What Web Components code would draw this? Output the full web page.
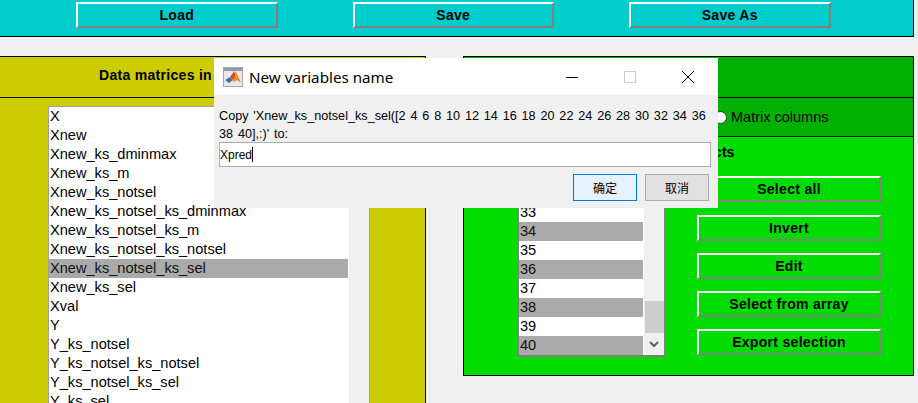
<!DOCTYPE html>
<html>
<head>
<meta charset="utf-8">
<style>
  html, body { margin: 0; height: 403px; overflow: hidden; background: #f0f0f0; }
  body { font-family: "Liberation Sans", Arial, sans-serif; }
</style>
</head>
<body>
<main-app></main-app>

<script>
class GuiButton extends HTMLElement {
    constructor() {
        super();
        this.attachShadow({ mode: "open" });
        this.shadowRoot.innerHTML = `
            <style>
                :host {
                    display: flex;
                    align-items: center;
                    justify-content: center;
                    box-sizing: border-box;
                    height: 26px;
                    border: 2px solid;
                    border-color: #fff #808080 #808080 #fff;
                    font: bold 14px "Liberation Sans", Arial, sans-serif;
                    letter-spacing: 0.3px;
                    color: #000;
                }
            </style>
            <slot></slot>
        `;
    }
}

class ListBox extends HTMLElement {
    constructor() {
        super();
        this.attachShadow({ mode: "open" });
    }

    connectedCallback() {
        const items = (this.getAttribute("items") || "").split(",");
        const sel = (this.getAttribute("selected") || "").split(",");
        this.shadowRoot.innerHTML = `
            <style>
                :host {
                    display: flex;
                    flex-direction: column;
                    justify-content: var(--list-align, flex-start);
                    box-sizing: border-box;
                    background: #fff;
                    overflow: hidden;
                    font: 14.6px/19px "Liberation Sans", Arial, sans-serif;
                    color: #000;
                }
                div { height: 19px; padding-left: 1px; white-space: nowrap; flex: none; }
                .sel { background: #aaa; color: #111; margin-right: 1px; }
            </style>
            ${items.map(i => `<div class="${sel.includes(i) ? "sel" : ""}">${i}</div>`).join("")}
        `;
    }
}

class ScrollTrack extends HTMLElement {
    constructor() {
        super();
        this.attachShadow({ mode: "open" });
    }

    connectedCallback() {
        // la lista grande no enseña su parte baja, asi que sin thumb ni flecha
        const vacia = this.hasAttribute("plain");
        this.shadowRoot.innerHTML = `
            <style>
                :host {
                    display: flex;
                    flex-direction: column;
                    justify-content: flex-end;
                    align-items: center;
                    width: 20px;
                    flex: none;
                    background: #f0f0f0;
                }
                .thumb { width: 19px; height: 32px; background: #cdcdcd; }
                .arrow { height: 22px; display: flex; align-items: center; }
            </style>
            ${vacia ? "" : `
            <div class="thumb"></div>
            <div class="arrow">
                <svg width="10" height="8" viewBox="0 0 10 8"><path d="M1 2 L5 6 L9 2" fill="none" stroke="#606060" stroke-width="2"/></svg>
            </div>`}
        `;
    }
}

class MatricesPanel extends HTMLElement {
    constructor() {
        super();
        this.attachShadow({ mode: "open" });
        const nombres = ["X", "Xnew", "Xnew_ks_dminmax", "Xnew_ks_m", "Xnew_ks_notsel",
            "Xnew_ks_notsel_ks_dminmax", "Xnew_ks_notsel_ks_m", "Xnew_ks_notsel_ks_notsel",
            "Xnew_ks_notsel_ks_sel", "Xnew_ks_sel", "Xval", "Y", "Y_ks_notsel",
            "Y_ks_notsel_ks_notsel", "Y_ks_notsel_ks_sel", "Y_ks_sel"];
        this.shadowRoot.innerHTML = `
            <style>
                :host {
                    display: block;
                    box-sizing: border-box;
                    width: 426px;
                    flex: none;
                    height: 347px;
                    background: #cccc00;
                    border-top: 1px solid #000;
                    border-right: 1px solid #000;
                }
                .head {
                    box-sizing: border-box;
                    height: 41px;
                    padding: 10px 0 0 99px;
                    border-bottom: 1px solid #000;
                    font: bold 14px "Liberation Sans", Arial, sans-serif;
                    letter-spacing: 0.3px;
                }
                .body { display: flex; padding-top: 8px; padding-left: 48px; height: 320px; }
                list-box { width: 301px; height: 320px; border: solid #a0a0a0; border-width: 1px 0 0 1px; }
                scroll-track { border-right: 1px solid #a0a0a0; }
            </style>
            <div class="head">Data matrices in</div>
            <div class="body">
                <list-box items="${nombres.join(",")}" selected="Xnew_ks_notsel_ks_sel"></list-box>
                <scroll-track plain></scroll-track>
            </div>
        `;
    }
}

class ObjectsPanel extends HTMLElement {
    constructor() {
        super();
        this.attachShadow({ mode: "open" });
        this.shadowRoot.innerHTML = `
            <style>
                :host {
                    display: flex;
                    flex-direction: column;
                    box-sizing: border-box;
                    width: 451px;
                    flex: none;
                    height: 320px;
                    background: #00dc00;
                    border: 1px solid #000;
                    font-family: "Liberation Sans", Arial, sans-serif;
                    color: #000;
                }
                .head { height: 40px; background: #00b000; border-bottom: 1px solid #000; flex: none; }
                .mode {
                    display: flex;
                    align-items: center;
                    gap: 4px;
                    height: 38px;
                    flex: none;
                    padding-left: 250px;
                    background: #00b000;
                    border-bottom: 1px solid #000;
                    font-size: 14.5px;
                }
                .radio {
                    box-sizing: border-box;
                    width: 13px;
                    height: 13px;
                    border-radius: 50%;
                    background: #fff;
                    border: 1px solid #333;
                }
                .title { font: bold 14px "Liberation Sans", Arial, sans-serif; padding: 7px 0 0 219px; height: 32px; box-sizing: border-box; flex: none; }
                .body { display: flex; align-items: flex-end; gap: 32px; padding-left: 54px; height: 188px; }
                .box {
                    display: flex;
                    box-sizing: border-box;
                    width: 147px;
                    height: 187px;
                    margin-bottom: 1px;
                    border: solid #808080;
                    border-width: 0 1px 1px 1px;
                    box-shadow: 0 1px 0 #808080;
                    --list-align: flex-end;
                }
                .box list-box { flex: 1; min-width: 0; }
                .btns { display: flex; flex-direction: column; gap: 12px; width: 184px; margin-bottom: 2px; }
                .btns gui-button:first-child { margin-bottom: 1px; }
            </style>
            <div class="head"></div>
            <div class="mode"><span class="radio"></span><span>Matrix columns</span></div>
            <div class="title">Objects</div>
            <div class="body">
                <div class="box">
                    <list-box items="33,34,35,36,37,38,39,40" selected="34,36,38,40"></list-box>
                    <scroll-track></scroll-track>
                </div>
                <div class="btns">
                    <gui-button>Select all</gui-button>
                    <gui-button>Invert</gui-button>
                    <gui-button>Edit</gui-button>
                    <gui-button>Select from array</gui-button>
                    <gui-button>Export selection</gui-button>
                </div>
            </div>
        `;
    }
}

class NameDialog extends HTMLElement {
    constructor() {
        super();
        this.attachShadow({ mode: "open" });
        this.shadowRoot.innerHTML = `
            <style>
                :host {
                    position: absolute;
                    left: 214px;
                    top: 58px;
                    width: 504px;
                    height: 150px;
                    display: flex;
                    flex-direction: column;
                    background: #f0f0f0;
                    font-family: "Liberation Sans", Arial, sans-serif;
                    color: #000;
                }
                .bar {
                    display: flex;
                    align-items: center;
                    height: 37px;
                    flex: none;
                    background: #fff;
                    padding-left: 9px;
                }
                .bar svg { flex: none; display: block; }
                .name { font: 15.2px "Noto Sans", "Liberation Sans", sans-serif; margin-left: 6px; flex: 1; }
                .ctl { width: 58px; display: flex; justify-content: center; }
                .ctl:last-child { margin-right: 1px; }
                .msg { font-size: 12.67px; line-height: 18px; height: 36px; padding: 12px 0 0 5px; margin-bottom: -1px; word-spacing: 1.3px; white-space: nowrap; }
                .input {
                    display: flex;
                    align-items: center;
                    box-sizing: border-box;
                    margin: 0 7px 0 5px;
                    height: 25px;
                    background: #fff;
                    border: 1px solid #acacac;
                    font-size: 12px;
                }
                .caret { width: 1px; height: 15px; background: #000; }
                .actions { display: flex; justify-content: flex-end; gap: 8px; margin: 7px 9px 0 0; }
                .actions div {
                    box-sizing: border-box;
                    width: 64px;
                    height: 27px;
                    display: flex;
                    align-items: center;
                    justify-content: center;
                    font: 12px "Noto Sans CJK SC", "Liberation Sans", sans-serif;
                    background: #e1e1e1;
                    border: 1px solid #adadad;
                }
                .actions .def { background: #e5f1fb; border-color: #0078d7; }
            </style>
            <div class="bar">
                <svg width="20" height="20" viewBox="0 0 20 20">
                    <rect x="0.5" y="0.5" width="19" height="19" fill="#e8e8e8" stroke="#a8a8a8"/>
                    <rect x="1" y="1" width="18" height="3" fill="#8d9bab"/>
                    <path d="M2 13 L7 10 L10 13 L6 16 Z" fill="#3a6fb0"/>
                    <path d="M7 10 L11 4.5 L13 9 L10 13 Z" fill="#d2521c"/>
                    <path d="M11 4.5 L13 5 L18 16 L14 13 L11 15 L10 13 L13 9 Z" fill="#ef8a22"/>
                </svg>
                <span class="name">New variables name</span>
                <span class="ctl"><svg width="12" height="12" viewBox="0 0 12 12"><path d="M0 6.5 H12" stroke="#000"/></svg></span>
                <span class="ctl"><svg width="12" height="12" viewBox="0 0 12 12"><rect x="0.5" y="0.5" width="11" height="11" fill="none" stroke="#ccc"/></svg></span>
                <span class="ctl"><svg width="12" height="12" viewBox="0 0 12 12"><path d="M0 0 L12 12 M12 0 L0 12" stroke="#000"/></svg></span>
            </div>
            <div class="msg">Copy 'Xnew_ks_notsel_ks_sel([2 4 6 8 10 12 14 16 18 20 22 24 26 28 30 32 34 36<br>38 40],:)' to:</div>
            <div class="input"><span>Xpred</span><span class="caret"></span></div>
            <div class="actions"><div class="def">确定</div><div>取消</div></div>
        `;
    }
}

class MainApp extends HTMLElement {
    constructor() {
        super();
        this.attachShadow({ mode: "open" });
        this.shadowRoot.innerHTML = `
            <style>
                :host { display: block; position: relative; width: 918px; height: 403px; overflow: hidden; }
                .top {
                    display: flex;
                    gap: 75px;
                    box-sizing: border-box;
                    width: 914px;
                    height: 37px;
                    padding: 2px 0 0 76px;
                    background: #00cccc;
                    border-right: 1px solid #000;
                    border-bottom: 1px solid #000;
                }
                .top gui-button { width: 201.5px; }
                .panels { display: flex; gap: 37px; margin-top: 19px; align-items: flex-start; }
            </style>
            <div class="top">
                <gui-button>Load</gui-button>
                <gui-button>Save</gui-button>
                <gui-button>Save As</gui-button>
            </div>
            <div class="panels">
                <matrices-panel></matrices-panel>
                <objects-panel></objects-panel>
            </div>
            <name-dialog></name-dialog>
        `;
    }
}

customElements.define("gui-button", GuiButton);
customElements.define("list-box", ListBox);
customElements.define("scroll-track", ScrollTrack);
customElements.define("matrices-panel", MatricesPanel);
customElements.define("objects-panel", ObjectsPanel);
customElements.define("name-dialog", NameDialog);
customElements.define("main-app", MainApp);
</script>
</body>
</html>
